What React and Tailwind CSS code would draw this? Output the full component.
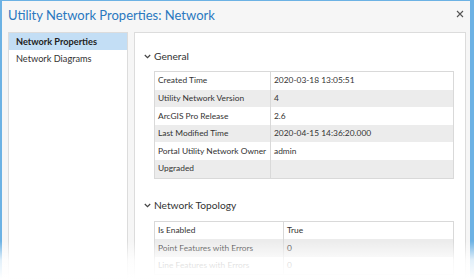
import React from "react";

const general = [
  ["Created Time", "2020-03-18 13:05:51"],
  ["Utility Network Version", "4"],
  ["ArcGIS Pro Release", "2.6"],
  ["Last Modified Time", "2020-04-15 14:36:20.000"],
  ["Portal Utility Network Owner", "admin"],
  ["Upgraded", ""],
];

const topology = [
  ["Is Enabled", "True"],
  ["Point Features with Errors", "0"],
  ["Line Features with Errors", "0"],
];

function Chevron() {
  return (
    <svg width="7" height="5" viewBox="0 0 7 5" className="mr-[3px]">
      <path d="M0.8 1 L3.5 3.7 L6.2 1" fill="none" stroke="#444" strokeWidth="1.2" />
    </svg>
  );
}

function Table({ rows, col }) {
  return (
    <div className="ml-[19px] w-[300px] border border-[#d9d9d9]">
      {rows.map(([k, v], i) => (
        <div
          key={k}
          className={
            "flex h-[17.6px] items-center text-[8.4px] text-[#333] whitespace-nowrap " +
            (i % 2 === 1 ? "bg-[#ececec]" : "bg-white")
          }
        >
          <div className={"h-full flex items-center pl-[3px] border-r border-[#d9d9d9] " + col}>{k}</div>
          <div className="pl-[3px]">{v}</div>
        </div>
      ))}
    </div>
  );
}

export default function App() {
  return (
    <div
      className="relative w-[474px] h-[279px] overflow-hidden bg-[#6cb2e4] pl-[2px] pt-[1px] pr-[4px]"
      style={{ fontFamily: 'Lato, "Open Sans", sans-serif' }}
    >
      <div className="h-full bg-[#f6f6f6] flex flex-col">
        <div className="h-[31px] flex items-center justify-between pl-[6px] pr-[6px]">
          <div className="text-[13px] text-[#2a78bf] leading-none pb-[2px]">
            Utility Network Properties: Network
          </div>
          <svg width="8" height="8" viewBox="0 0 8 8" className="mb-[5px]">
            <path d="M1 1 L7 7 M7 1 L1 7" stroke="#555" strokeWidth="1.1" />
          </svg>
        </div>
        <div className="flex-1 flex gap-[6px] pl-[6px] pr-[4px]">
          <div className="w-[120px] bg-white border border-[#dcdcdc] text-[9.2px] text-[#333] whitespace-nowrap">
            <div className="h-[17px] bg-[#c3def5] font-bold flex items-center pl-[7px] text-[#222]">
              Network Properties
            </div>
            <div className="h-[17px] flex items-center pl-[7px]">Network Diagrams</div>
          </div>
          <div className="flex-1 bg-white border border-[#dcdcdc]">
            <div className="h-[15px] mt-[16px] mb-[7px] flex items-center pl-[9px] text-[10.2px] text-[#333]">
              <Chevron />
              General
            </div>
            <Table rows={general} col="w-[116px]" />
            <div className="h-[16px] mt-[19px] mb-[7px] flex items-center pl-[9px] text-[10.2px] text-[#333]">
              <Chevron />
              Network Topology
            </div>
            <Table rows={topology} col="w-[129px]" />
          </div>
        </div>
      </div>
      <div className="absolute left-0 right-0 bottom-0 h-[38px] bg-gradient-to-b from-transparent via-white/80 to-white" />
    </div>
  );
}
